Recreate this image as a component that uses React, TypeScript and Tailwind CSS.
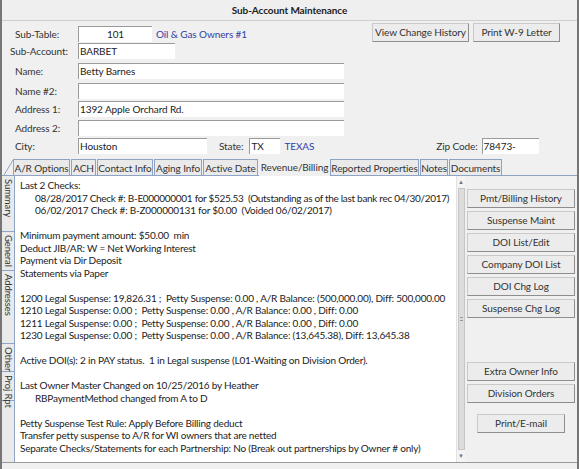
const font = { fontFamily: 'Lato, "Noto Sans", sans-serif' };

function Field({ label, value, width, center }: { label: string; value?: string; width: string; center?: boolean }) {
  return (
    <div className="flex items-center">
      <div className="w-[76px] pl-[13px] text-[#333]">{label}</div>
      <Input value={value} width={width} center={center} />
    </div>
  );
}

function Input({ value, width, center }: { value?: string; width: string; center?: boolean }) {
  return (
    <div
      className={`${width} h-[16px] bg-white border-t border-l border-[#9a9a9a] leading-[15px] px-[1px] text-[#222] whitespace-nowrap ${center ? "text-center" : ""}`}
    >
      {value}
    </div>
  );
}

function WinButton({ label, className = "" }: { label: string; className?: string }) {
  return (
    <div
      className={`h-[19px] flex items-center justify-center whitespace-nowrap bg-[#ececec] border border-[#c9c9c9] border-r-[#8e8e8e] border-b-[#8e8e8e] text-[#333] ${className}`}
    >
      {label}
    </div>
  );
}

const tabs = [
  { t: "A/R Options", w: "w-[57px]" },
  { t: "ACH", w: "w-[25px]" },
  { t: "Contact Info", w: "w-[56px]" },
  { t: "Aging Info", w: "w-[48px]" },
  { t: "Active Date", w: "w-[55px]" },
  { t: "Revenue/Billing", w: "w-[71px]" },
  { t: "Reported Properties", w: "w-[89px]" },
  { t: "Notes", w: "w-[28px]" },
  { t: "Documents", w: "w-[53px]" },
];
const sideTabs = [
  { label: "Summary", h: "h-[56px]" },
  { label: "General", h: "h-[39px]" },
  { label: "Addresses", h: "h-[73px]" },
  { label: "Other", h: "h-[28px]" },
  { label: "Proj Rpt", h: "h-[29px]" },
];

const lines: { t: string; indent?: boolean; tight?: boolean }[] = [
  { t: "Last 2 Checks:" },
  { t: "08/28/2017 Check #: B-E000000001 for $525.53  (Outstanding as of the last bank rec 04/30/2017)", indent: true, tight: true },
  { t: "06/02/2017 Check #: B-Z000000131 for $0.00  (Voided 06/02/2017)", indent: true },
  { t: "" },
  { t: "Minimum payment amount: $50.00  min" },
  { t: "Deduct JIB/AR: W = Net Working Interest" },
  { t: "Payment via Dir Deposit" },
  { t: "Statements via Paper" },
  { t: "" },
  { t: "1200 Legal Suspense: 19,826.31 ;  Petty Suspense: 0.00 , A/R Balance: (500,000.00), Diff: 500,000.00" },
  { t: "1210 Legal Suspense: 0.00 ;  Petty Suspense: 0.00 , A/R Balance: 0.00 , Diff: 0.00" },
  { t: "1211 Legal Suspense: 0.00 ;  Petty Suspense: 0.00 , A/R Balance: 0.00 , Diff: 0.00" },
  { t: "1230 Legal Suspense: 0.00 ;  Petty Suspense: 0.00 , A/R Balance: (13,645.38), Diff: 13,645.38" },
  { t: "" },
  { t: "Active DOI(s): 2 in PAY status.  1 in Legal suspense (L01-Waiting on Division Order)." },
  { t: "" },
  { t: "Last Owner Master Changed on 10/25/2016 by Heather" },
  { t: "RBPaymentMethod changed from A to D", indent: true },
  { t: "" },
  { t: "Petty Suspense Test Rule: Apply Before Billing deduct" },
  { t: "Transfer petty suspense to A/R for WI owners that are netted" },
  { t: "Separate Checks/Statements for each Partnership: No (Break out partnerships by Owner # only)" },
];

export default function App() {
  return (
    <div
      style={font}
      className="w-[579px] h-[469px] bg-[#f0f0f0] border-l-2 border-r-2 border-[#767676] text-[10px] tracking-[-0.1px] flex flex-col overflow-hidden"
    >
      <div className="h-[21px] shrink-0 flex items-center justify-center font-bold text-[#222] bg-[#efefef] border-b border-[#cfcfcf]">
        Sub-Account Maintenance
      </div>

      <div className="flex flex-col">
        <div className="flex items-center mt-[5px] h-[16px]">
          <Field label="Sub-Table:" value="101" width="w-[74px]" center />
          <span className="ml-[4px] text-[#2f3fa8]">Oil &amp; Gas Owners #1</span>
          <div className="ml-auto mr-[17px] flex gap-[4px] -mt-[4px]">
            <WinButton label="View Change History" className="w-[97px] h-[18px]" />
            <WinButton label="Print W-9 Letter" className="w-[87px] h-[18px]" />
          </div>
        </div>
        <div className="mt-[1px] flex items-center h-[16px]">
          <div className="w-[76px] pl-[8px] text-[#333]">Sub-Account:</div>
          <Input value="BARBET" width="w-[97px]" />
        </div>
        <div className="mt-[4px]">
          <Field label="Name:" value="Betty Barnes" width="w-[266px]" />
        </div>
        <div className="mt-[4px]">
          <Field label="Name #2:" width="w-[266px]" />
        </div>
        <div className="mt-[2px]">
          <Field label="Address 1:" value="1392 Apple Orchard Rd." width="w-[266px]" />
        </div>
        <div className="mt-[3px]">
          <Field label="Address 2:" width="w-[266px]" />
        </div>
        <div className="mt-[2px] flex items-center">
          <Field label="City:" value="Houston" width="w-[129px]" />
          <span className="ml-[12px] text-[#333]">State:</span>
          <div className="ml-[6px]">
            <Input value="TX" width="w-[31px]" />
          </div>
          <span className="ml-[4px] text-[#2f3fa8]">TEXAS</span>
          <span className="ml-[122px] text-[#333]">Zip Code:</span>
          <div className="ml-[4px]">
            <Input value="78473-" width="w-[57px]" />
          </div>
        </div>
      </div>

      <div className="mt-[5px] h-[17px] shrink-0 flex items-end pl-[2px] border-b border-[#8fa3c6]">
        <svg width="9" height="16" className="shrink-0">
          <line x1="0" y1="16" x2="9" y2="1" stroke="#8fa3c6" />
        </svg>
        {tabs.map(({ t, w }) => {
          const active = t === "Revenue/Billing";
          return (
            <div
              key={t}
              className={`${w} leading-[16px] whitespace-nowrap text-center text-[#333] ${
                active
                  ? "bg-[#f0f0f0] -mb-[1px] h-[17px]"
                  : "h-[16px] bg-[#eaeaea] border border-b-0 border-[#8fa3c6] mr-[1px]"
              }`}
            >
              {t}
            </div>
          );
        })}
      </div>

      <div className="flex flex-1 min-h-0 mb-[6px] border-b border-[#9a9a9a]">
        <div className="w-[13px] shrink-0 flex flex-col border-r border-[#8fa3c6] bg-[#eaeaea] overflow-hidden">
          {sideTabs.map((s) => (
            <div
              key={s.label}
              className={`${s.h} shrink-0 flex flex-col items-center pt-[3px] border-b border-[#8fa3c6] text-[#333]`}
            >
              <span className="whitespace-nowrap [writing-mode:vertical-rl] text-[9.5px] leading-[12px]">{s.label}</span>
            </div>
          ))}
        </div>

        <div className="flex-1 bg-white pl-[5px] pt-[3px] leading-[12.5px] text-[#222] tracking-[-0.2px] whitespace-pre overflow-hidden">
          {lines.map((l, i) => (
            <div key={i} className={`h-[12.5px] ${l.indent ? "pl-[15px]" : ""} ${l.tight ? "tracking-[-0.3px]" : ""}`}>
              {l.t}
            </div>
          ))}
        </div>

        <div className="w-[9px] shrink-0 bg-[#f4f4f4] flex flex-col items-center border-l border-[#e2e2e2]">
          <div className="h-[12px] text-[6px] text-[#777] leading-[12px]">▲</div>
          <div className="flex-1 w-[7px] bg-[#dcdcdc] border border-[#c6c6c6] flex items-center justify-center">
            <div className="w-[3px] h-[4px] border-t border-b border-[#999]" />
          </div>
          <div className="h-[12px] text-[6px] text-[#777] leading-[12px]">▼</div>
        </div>

        <div className="w-[112px] shrink-0 flex flex-col items-center pt-[13px] gap-[3px]">
          <WinButton label="Pmt/Billing History" className="w-[108px]" />
          <WinButton label="Suspense Maint" className="w-[108px]" />
          <WinButton label="DOI List/Edit" className="w-[108px]" />
          <WinButton label="Company DOI List" className="w-[108px]" />
          <WinButton label="DOI Chg Log" className="w-[108px]" />
          <WinButton label="Suspense Chg Log" className="w-[108px]" />
          <WinButton label="Extra Owner Info" className="w-[108px] mt-[41px]" />
          <WinButton label="Division Orders" className="w-[108px]" />
          <WinButton label="Print/E-mail" className="w-[88px] mt-[8px]" />
        </div>
      </div>
    </div>
  );
}
